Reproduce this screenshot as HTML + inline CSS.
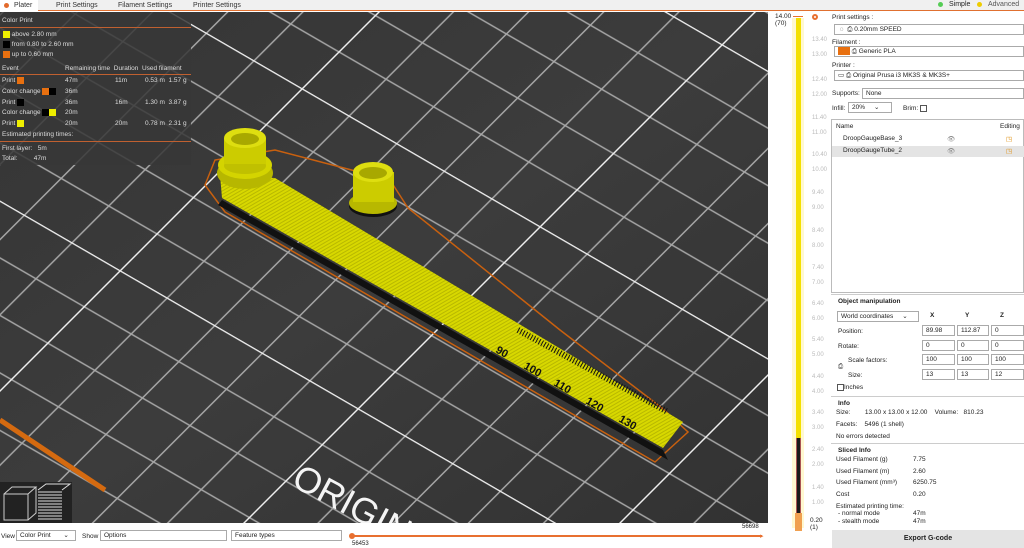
<!DOCTYPE html>
<html><head><meta charset="utf-8"><style>
*{margin:0;padding:0;box-sizing:border-box}
body{width:1024px;height:548px;overflow:hidden;background:#fff;font-family:"Liberation Sans",sans-serif;font-size:7px;color:#222;position:relative}
.a{position:absolute;white-space:nowrap}
.tab{position:absolute;top:0;height:11px;font-size:7px;line-height:11px;padding-left:14px;color:#333}
.lg{color:#ddd;font-size:6.5px}
.sw{display:inline-block;width:7px;height:7px;vertical-align:middle}
.box{position:absolute;border:1px solid #aaa;background:#fff;height:11px;font-size:6.5px;line-height:9px;padding-left:3px}
.lbl{position:absolute;font-size:6.5px;color:#222}
.tick{position:absolute;left:812px;font-size:6px;color:#bbb}
</style></head><body>
<div class="a" style="left:0;top:0;width:1024px;height:11px;background:#f0f0f0;border-bottom:1px solid #e07030"></div>
<div class="tab" style="left:0;width:38px;background:#fff">Plater</div>
<div class="a" style="left:4px;top:3px;width:5px;height:5px;border-radius:50%;background:#e36b2d"></div>
<div class="tab" style="left:42px">Print Settings</div>
<div class="tab" style="left:104px">Filament Settings</div>
<div class="tab" style="left:179px">Printer Settings</div>
<div class="a" style="left:938px;top:2px;width:5px;height:5px;border-radius:50%;background:#5c5"></div>
<div class="a" style="left:949px;top:1px;font-size:7px">Simple</div>
<div class="a" style="left:977px;top:2px;width:5px;height:5px;border-radius:50%;background:#ec0"></div>
<div class="a" style="left:988px;top:1px;font-size:7px;color:#555">Advanced</div>

<svg class="a" style="left:0;top:12px" width="768" height="511" viewBox="0 12 768 511">
<defs>
<linearGradient id="bg" x1="0" y1="0" x2="1" y2="1"><stop offset="0" stop-color="#353535"/><stop offset="0.5" stop-color="#3c3c3c"/><stop offset="1" stop-color="#323232"/></linearGradient>
<pattern id="g" width="200" height="200" patternUnits="userSpaceOnUse" patternTransform="matrix(1.19,0.69,-0.91,0.91,120,270)">
<path d="M0 40H200M0 80H200M0 120H200M0 160H200M40 0V200M80 0V200M120 0V200M160 0V200" stroke="#a8a8a8" stroke-width="1.1" fill="none"/>
<path d="M0 0H200M0 0V200" stroke="#eee" stroke-width="2.2" fill="none"/></pattern>
<pattern id="hat" width="3" height="3" patternUnits="userSpaceOnUse" patternTransform="rotate(60)"><rect width="3" height="3" fill="#d8d800"/><rect width="1" height="3" fill="#b8b800"/></pattern>
</defs>
<rect x="0" y="12" width="768" height="511" fill="url(#bg)"/>
<rect x="0" y="12" width="768" height="511" fill="url(#g)"/>
<line x1="0" y1="420" x2="105" y2="490" stroke="#d46a10" stroke-width="5"/>
<text x="290" y="485" fill="#f4f4f4" font-size="36" font-family="Liberation Sans" transform="rotate(28 290 485)">ORIGIN</text>
<path d="M215,160 L205,185 L225,212 L655,462 L688,432 L662,408 L560,330 L408,208 L390,180 L275,150 Z" fill="none" stroke="#c8600f" stroke-width="1.5"/>
<polygon points="222,200 663,450 668,460 218,205" fill="#111"/>
<polygon points="275,178 683,422 663,448 222,198 220,175" fill="url(#hat)"/>
<ellipse cx="245" cy="173" rx="28" ry="16" fill="#b7b700"/>
<ellipse cx="245" cy="165" rx="27" ry="14" fill="#d4d400"/>
<rect x="224" y="138" width="42" height="28" fill="#c8c800"/>
<ellipse cx="245" cy="166" rx="21" ry="8" fill="#c0c000"/>
<rect x="224" y="138" width="42" height="26" fill="#cccc00"/>
<ellipse cx="245" cy="138" rx="21" ry="10" fill="#dede10"/>
<ellipse cx="245" cy="139" rx="14" ry="6" fill="#a8a800"/>
<ellipse cx="373" cy="206" rx="24" ry="11" fill="#111"/>
<ellipse cx="373" cy="203" rx="24" ry="11" fill="#b8b800"/>
<rect x="353" y="172" width="41" height="30" fill="#cccc00"/>
<ellipse cx="373" cy="172" rx="20" ry="10" fill="#dede10"/>
<ellipse cx="373" cy="173" rx="14" ry="6" fill="#a8a800"/>
<g font-size="11" font-family="Liberation Sans" font-weight="bold" fill="#111">
<text x="495" y="352" transform="rotate(30 495 352)">90</text>
<text x="523" y="368" transform="rotate(30 523 368)">100</text>
<text x="553" y="385" transform="rotate(30 553 385)">110</text>
<text x="585" y="403" transform="rotate(30 585 403)">120</text>
<text x="618" y="421" transform="rotate(30 618 421)">130</text>
</g>
<path d="M518,330 L668,412" stroke="#111" stroke-width="6" stroke-dasharray="1 2" fill="none"/>
<rect x="0" y="482" width="72" height="41" fill="#222"/>
<rect x="4" y="494" width="24" height="26" fill="none" stroke="#ccc"/>
<path d="M4,494 l8,-7 h24 l-8,7 M36,487 v26 l-8,7" fill="none" stroke="#ccc"/>
<g stroke="#ddd" fill="none"><path d="M38,492h24M38,495h24M38,498h24M38,501h24M38,504h24M38,507h24M38,510h24M38,513h24M38,516h24M38,519h24"/><path d="M38,490 l8,-6 h24 l-8,6"/></g>
</svg>

<div class="a" style="left:0;top:12px;width:191px;height:153px;background:rgba(55,55,55,0.85)"></div>
<div class="a lg" style="left:2px;top:17px">Color Print</div>
<div class="a" style="left:0;top:27px;width:191px;border-top:1px solid #c06030"></div>
<div class="a lg" style="left:3px;top:31px"><span class="sw" style="background:#ee0"></span> above 2.80 mm</div>
<div class="a lg" style="left:3px;top:41px"><span class="sw" style="background:#000"></span> from 0.80 to 2.60 mm</div>
<div class="a lg" style="left:3px;top:51px"><span class="sw" style="background:#e87010"></span> up to 0.60 mm</div>
<div class="a lg" style="left:2px;top:65px">Event</div>
<div class="a lg" style="left:65px;top:65px">Remaining time &nbsp;Duration &nbsp;Used filament</div>
<div class="a" style="left:0;top:74px;width:191px;border-top:1px solid #c06030"></div>
<div class="a lg" style="left:2px;top:77px">Print <span class="sw" style="background:#e87010"></span></div>
<div class="a lg" style="left:65px;top:77px">47m</div><div class="a lg" style="left:115px;top:77px">11m</div><div class="a lg" style="left:145px;top:77px">0.53 m &nbsp;1.57 g</div>
<div class="a lg" style="left:2px;top:88px">Color change <span class="sw" style="background:#e87010"></span><span class="sw" style="background:#000"></span></div>
<div class="a lg" style="left:65px;top:88px">36m</div>
<div class="a lg" style="left:2px;top:99px">Print <span class="sw" style="background:#000"></span></div>
<div class="a lg" style="left:65px;top:99px">36m</div><div class="a lg" style="left:115px;top:99px">16m</div><div class="a lg" style="left:145px;top:99px">1.30 m &nbsp;3.87 g</div>
<div class="a lg" style="left:2px;top:109px">Color change <span class="sw" style="background:#000"></span><span class="sw" style="background:#ee0"></span></div>
<div class="a lg" style="left:65px;top:109px">20m</div>
<div class="a lg" style="left:2px;top:120px">Print <span class="sw" style="background:#ee0"></span></div>
<div class="a lg" style="left:65px;top:120px">20m</div><div class="a lg" style="left:115px;top:120px">20m</div><div class="a lg" style="left:145px;top:120px">0.78 m &nbsp;2.31 g</div>
<div class="a lg" style="left:2px;top:131px">Estimated printing times:</div>
<div class="a" style="left:0;top:141px;width:191px;border-top:1px solid #c06030"></div>
<div class="a lg" style="left:2px;top:145px">First layer: &nbsp;&nbsp;5m</div>
<div class="a lg" style="left:2px;top:155px">Total: &nbsp;&nbsp;&nbsp;&nbsp;&nbsp;&nbsp;&nbsp;&nbsp;47m</div>

<div class="a" style="left:768px;top:12px;width:62px;height:536px;background:#fff"></div>
<div class="a" style="left:792px;top:18px;width:12px;height:510px;background:#fff8d0"></div>
<div class="a" style="left:796px;top:18px;width:5px;height:420px;background:#f4e000"></div>
<div class="a" style="left:796px;top:438px;width:5px;height:75px;background:#1a1a1a;border-left:1px solid #a55;border-right:1px solid #a55"></div>
<div class="a" style="left:795px;top:513px;width:7px;height:18px;background:#f0a050"></div>
<div class="a" style="left:793px;top:16px;width:10px;height:1px;background:#e87030"></div>
<div class="a" style="left:812px;top:14px;width:6px;height:6px;border:2px solid #e87030;border-radius:50%"></div>
<div class="a" style="left:775px;top:13px;font-size:6.5px">14.00<br>(70)</div>
<div class="a" style="left:810px;top:517px;font-size:6.5px">0.20<br>(1)</div>
<div class="tick" style="top:37px">13.40</div><div class="tick" style="top:52px">13.00</div>
<div class="tick" style="top:77px">12.40</div><div class="tick" style="top:92px">12.00</div>
<div class="tick" style="top:115px">11.40</div><div class="tick" style="top:130px">11.00</div>
<div class="tick" style="top:152px">10.40</div><div class="tick" style="top:167px">10.00</div>
<div class="tick" style="top:190px">9.40</div><div class="tick" style="top:205px">9.00</div>
<div class="tick" style="top:228px">8.40</div><div class="tick" style="top:243px">8.00</div>
<div class="tick" style="top:265px">7.40</div><div class="tick" style="top:280px">7.00</div>
<div class="tick" style="top:301px">6.40</div><div class="tick" style="top:316px">6.00</div>
<div class="tick" style="top:337px">5.40</div><div class="tick" style="top:352px">5.00</div>
<div class="tick" style="top:374px">4.40</div><div class="tick" style="top:389px">4.00</div>
<div class="tick" style="top:410px">3.40</div><div class="tick" style="top:425px">3.00</div>
<div class="tick" style="top:447px">2.40</div><div class="tick" style="top:462px">2.00</div>
<div class="tick" style="top:485px">1.40</div><div class="tick" style="top:500px">1.00</div>

<div class="lbl" style="left:832px;top:14px">Print settings :</div>
<div class="box" style="left:834px;top:24px;width:190px">&nbsp;◌ &nbsp;⎙ 0.20mm SPEED</div>
<div class="lbl" style="left:832px;top:39px">Filament :</div>
<div class="box" style="left:834px;top:46px;width:190px"><span class="sw" style="background:#e87010;width:12px;height:8px"></span> ⎙ Generic PLA</div>
<div class="lbl" style="left:832px;top:62px">Printer :</div>
<div class="box" style="left:834px;top:70px;width:190px">▭ ⎙ Original Prusa i3 MK3S &amp; MK3S+</div>
<div class="lbl" style="left:832px;top:90px">Supports:</div>
<div class="box" style="left:862px;top:88px;width:162px">None</div>
<div class="lbl" style="left:832px;top:105px">Infill:</div>
<div class="box" style="left:848px;top:102px;width:44px">20% &nbsp;&nbsp;&nbsp;&nbsp;⌄</div>
<div class="lbl" style="left:903px;top:105px">Brim: <span style="display:inline-block;width:7px;height:7px;border:1px solid #555;vertical-align:middle"></span></div>
<div class="a" style="left:831px;top:119px;width:193px;height:174px;border:1px solid #bbb;background:#fff"></div>
<div class="lbl" style="left:836px;top:123px">Name</div>
<div class="lbl" style="left:1000px;top:123px">Editing</div>
<div class="lbl" style="left:843px;top:135px">DroopGaugeBase_3</div>
<div class="a" style="left:832px;top:146px;width:192px;height:11px;background:#e4e4e4"></div>
<div class="lbl" style="left:843px;top:147px">DroopGaugeTube_2</div>
<div class="lbl" style="left:947px;top:135px;color:#888">👁</div><div class="lbl" style="left:947px;top:147px;color:#888">👁</div>
<div class="lbl" style="left:1006px;top:135px;color:#d80">◳</div><div class="lbl" style="left:1006px;top:147px;color:#d80">◳</div>

<div class="a" style="left:831px;top:294px;width:193px;border-top:1px solid #ccc"></div>
<div class="lbl" style="left:838px;top:298px;font-weight:bold">Object manipulation</div>
<div class="box" style="left:837px;top:311px;width:82px">World coordinates &nbsp;&nbsp;&nbsp;&nbsp;⌄</div>
<div class="lbl" style="left:930px;top:312px;font-weight:bold">X</div>
<div class="lbl" style="left:965px;top:312px;font-weight:bold">Y</div>
<div class="lbl" style="left:1000px;top:312px;font-weight:bold">Z</div>
<div class="lbl" style="left:838px;top:328px">Position:</div>
<div class="box" style="left:922px;top:325px;width:33px">89.98</div><div class="box" style="left:957px;top:325px;width:32px">112.87</div><div class="box" style="left:991px;top:325px;width:33px">0</div>
<div class="lbl" style="left:838px;top:343px">Rotate:</div>
<div class="box" style="left:922px;top:340px;width:33px">0</div><div class="box" style="left:957px;top:340px;width:32px">0</div><div class="box" style="left:991px;top:340px;width:33px">0</div>
<div class="lbl" style="left:848px;top:357px">Scale factors:</div>
<div class="lbl" style="left:838px;top:363px">⎙</div>
<div class="box" style="left:922px;top:354px;width:33px">100</div><div class="box" style="left:957px;top:354px;width:32px">100</div><div class="box" style="left:991px;top:354px;width:33px">100</div>
<div class="lbl" style="left:848px;top:372px">Size:</div>
<div class="box" style="left:922px;top:369px;width:33px">13</div><div class="box" style="left:957px;top:369px;width:32px">13</div><div class="box" style="left:991px;top:369px;width:33px">12</div>
<div class="lbl" style="left:837px;top:384px"><span style="display:inline-block;width:7px;height:7px;border:1px solid #555;vertical-align:middle"></span>Inches</div>
<div class="a" style="left:831px;top:396px;width:193px;border-top:1px solid #ccc"></div>
<div class="lbl" style="left:838px;top:400px;font-weight:bold">Info</div>
<div class="lbl" style="left:836px;top:409px">Size: &nbsp;&nbsp;&nbsp;&nbsp;&nbsp;&nbsp;&nbsp;13.00 x 13.00 x 12.00 &nbsp;&nbsp;&nbsp;Volume: &nbsp;&nbsp;810.23</div>
<div class="lbl" style="left:836px;top:421px">Facets: &nbsp;&nbsp;&nbsp;5496 (1 shell)</div>
<div class="lbl" style="left:836px;top:433px">No errors detected</div>
<div class="a" style="left:831px;top:443px;width:193px;border-top:1px solid #ccc"></div>
<div class="lbl" style="left:838px;top:447px;font-weight:bold">Sliced Info</div>
<div class="lbl" style="left:836px;top:456px">Used Filament (g)</div><div class="lbl" style="left:913px;top:456px">7.75</div>
<div class="lbl" style="left:836px;top:468px">Used Filament (m)</div><div class="lbl" style="left:913px;top:468px">2.60</div>
<div class="lbl" style="left:836px;top:479px">Used Filament (mm³)</div><div class="lbl" style="left:913px;top:479px">6250.75</div>
<div class="lbl" style="left:836px;top:491px">Cost</div><div class="lbl" style="left:913px;top:491px">0.20</div>
<div class="lbl" style="left:836px;top:503px">Estimated printing time:</div>
<div class="lbl" style="left:838px;top:510px">- normal mode</div><div class="lbl" style="left:913px;top:510px">47m</div>
<div class="lbl" style="left:838px;top:518px">- stealth mode</div><div class="lbl" style="left:913px;top:518px">47m</div>
<div class="a" style="left:832px;top:530px;width:192px;height:18px;background:#e4e4e4;text-align:center;font-size:7px;font-weight:bold;line-height:18px">Export G-code</div>

<div class="lbl" style="left:1px;top:533px">View</div>
<div class="box" style="left:16px;top:530px;width:60px">Color Print &nbsp;&nbsp;&nbsp;&nbsp;&nbsp;&nbsp;⌄</div>
<div class="lbl" style="left:82px;top:533px">Show</div>
<div class="box" style="left:100px;top:530px;width:127px">Options</div>
<div class="box" style="left:231px;top:530px;width:111px">Feature types</div>
<div class="a" style="left:349px;top:533px;width:6px;height:6px;border-radius:50%;background:#e87030"></div>
<div class="a" style="left:352px;top:535px;width:410px;height:2px;background:#e87030"></div>
<div class="a" style="left:760px;top:532px;color:#e87030;font-size:7px">▸</div>
<div class="lbl" style="left:742px;top:524px;font-size:6px">56698</div>
<div class="lbl" style="left:352px;top:541px;font-size:6px">56453</div>
</body></html>
